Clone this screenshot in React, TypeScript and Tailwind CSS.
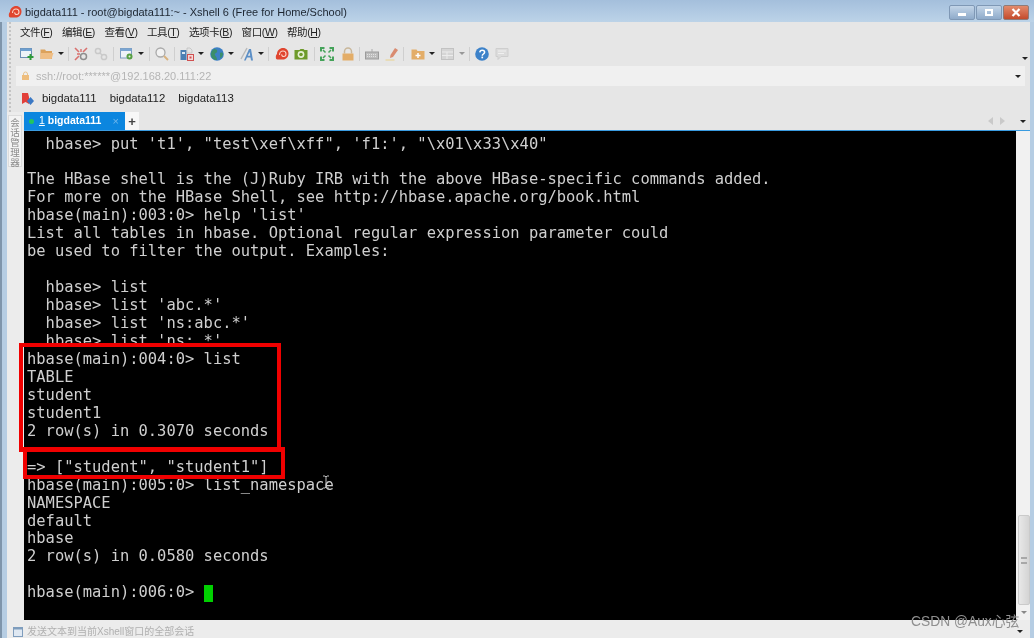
import React from 'react';

const lines = [
  `  hbase> put 't1', "test\\xef\\xff", 'f1:', "\\x01\\x33\\x40"`,
  '',
  'The HBase shell is the (J)Ruby IRB with the above HBase-specific commands added.',
  'For more on the HBase Shell, see http://hbase.apache.org/book.html',
  "hbase(main):003:0> help 'list'",
  'List all tables in hbase. Optional regular expression parameter could',
  'be used to filter the output. Examples:',
  '',
  '  hbase> list',
  "  hbase> list 'abc.*'",
  "  hbase> list 'ns:abc.*'",
  "  hbase> list 'ns:.*'",
  'hbase(main):004:0> list',
  'TABLE',
  'student',
  'student1',
  '2 row(s) in 0.3070 seconds',
  '',
  '=> ["student", "student1"]',
  'hbase(main):005:0> list_namespace',
  'NAMESPACE',
  'default',
  'hbase',
  '2 row(s) in 0.0580 seconds',
  '',
];

const menus = [
  ['文件', 'F'],
  ['编辑', 'E'],
  ['查看', 'V'],
  ['工具', 'T'],
  ['选项卡', 'B'],
  ['窗口', 'W'],
  ['帮助', 'H'],
];

function Caret({ className = 'ml-[4px]' }: { className?: string }) {
  return <span className={`${className} w-0 h-0 border-x-[3px] border-x-transparent border-t-[3px] border-t-[#222]`} />;
}

function Sep({ className = 'ml-[5px]' }: { className?: string }) {
  return <span className={`${className} w-px h-[14px] bg-[#cfcfcf]`} />;
}

function Ico({ children, className = 'ml-[6px]' }: { children: React.ReactNode; className?: string }) {
  return (
    <svg width="14" height="14" viewBox="0 0 14 14" fill="none" className={`${className} shrink-0`}>
      {children}
    </svg>
  );
}

// red snail logo, used in the title bar and the toolbar
function Snail() {
  return (
    <>
      <path d="M1 11.500C.5 9 1 8 2 7c0-3.500 3-6 6-6 3.500 0 5.500 2.500 5.500 5.500 0 3.500-2.500 6-5.500 6H3C2 12.500 1.200 12.200 1 11.500z" fill="#e0452f" />
      <path d="M4.500 8c0-2.500 1.500-4 3.500-4s3 1.500 3 3-1 2.500-2.300 2.500S6.500 8.500 6.800 7.300" stroke="#fbd5c8" strokeWidth="1.100" />
    </>
  );
}

function Toolbar() {
  return (
    <div className="h-[23px] flex items-center pl-[9px] pb-[2px]">
      <Ico className="ml-0">
        <rect x="0.5" y="1.5" width="11" height="9" fill="#eef3f8" stroke="#6d8fb5" />
        <rect x="0.5" y="1.5" width="11" height="2.5" fill="#6d9fd0" />
        <path d="M10.500 7v6M7.500 10h6" stroke="#2f9a3a" strokeWidth="2" />
      </Ico>
      <Ico>
        <path d="M0.500 2.500h4.500l1 1.500h6v8h-11.500z" fill="#dca25c" />
        <path d="M0.500 6h13l-2 6h-11z" fill="#efbe85" />
      </Ico>
      <Caret />
      <Sep className="ml-[4px]" />
      <Ico className="ml-[5px]">
        <path d="M1 1l4 4M13 1L9 5M1 13l4-4" stroke="#d9706e" strokeWidth="1.600" />
        <circle cx="9.500" cy="9.500" r="3" stroke="#8e8e8e" strokeWidth="1.500" />
        <path d="M3 7h3M7 2v3" stroke="#d9706e" strokeWidth="1.400" />
      </Ico>
      <Ico>
        <circle cx="4" cy="4" r="2.600" stroke="#c9c9c9" strokeWidth="1.500" />
        <circle cx="10" cy="10" r="2.600" stroke="#c9c9c9" strokeWidth="1.500" />
        <path d="M6 6l2 2" stroke="#c9c9c9" strokeWidth="1.500" />
      </Ico>
      <Sep />
      <Ico>
        <rect x="0.500" y="1.500" width="11" height="9.500" fill="#eef3f8" stroke="#7c9cc0" />
        <rect x="0.500" y="1.500" width="11" height="2.500" fill="#7aa5d2" />
        <circle cx="9.500" cy="9.500" r="3" fill="#57a043" />
        <circle cx="9.500" cy="9.500" r="1" fill="#e8f3e4" />
      </Ico>
      <Caret />
      <Sep />
      <Ico className="ml-[5px]">
        <circle cx="5.500" cy="5.500" r="4.500" fill="#f2f2f2" stroke="#a9a9a9" strokeWidth="1.300" />
        <path d="M9 9l4 4" stroke="#d8b27e" strokeWidth="2" />
      </Ico>
      <Sep />
      <Ico className="ml-[5px]">
        <rect x="0.500" y="3" width="6" height="10" fill="#4c7fb3" />
        <rect x="2" y="5" width="3" height="2" fill="#dbe7f3" />
        <path d="M7 1h3l2 2v3H7z" fill="#e4e4e4" stroke="#b5b5b5" strokeWidth="0.600" />
        <rect x="7.500" y="7.500" width="6" height="6" fill="#f4d9d9" stroke="#d05050" />
        <rect x="9.500" y="9.500" width="2" height="2" fill="#d05050" />
      </Ico>
      <Caret />
      <Ico>
        <circle cx="7" cy="7" r="6.800" fill="#3c7fc4" />
        <path d="M4 2c2 0 4 1 3 3S4 6 5 8s2 2 2 5c-3 0-6-2-6-6 0-2 1-4 3-5zM10 6c2-1 3 0 3 1s-1 3-2 4-1-3-1-5z" fill="#3b8e6a" />
      </Ico>
      <Caret />
      <Ico>
        <path d="M1 12L7 1" stroke="#b8b8b8" strokeWidth="1.400" />
        <path d="M4 13.500L9 2h2l2 11.500h-2l-.5-3H7l-1.300 3z" fill="#5c8fc6" />
        <path d="M7.800 8.700h2.400L9.600 5z" fill="#e4e4e4" />
      </Ico>
      <Caret />
      <Sep className="ml-[4px]" />
      <Ico><Snail /></Ico>
      <Ico className="ml-[5px]">
        <path d="M0.500 3h5l1 -1h3l1 1h3v9.500h-13z" fill="#6d9a2a" />
        <circle cx="7" cy="7.500" r="3.400" fill="#e5f0d5" />
        <circle cx="7" cy="7.500" r="1.800" fill="#6d9a2a" />
      </Ico>
      <Sep className="ml-[6px]" />
      <Ico className="ml-[5px]">
        <path d="M1 4.500V1h3.500M9.500 1H13v3.500M13 9.500V13H9.500M4.500 13H1V9.500" stroke="#45a35a" strokeWidth="2" />
        <path d="M3 3l2.500 2.500M11 3L8.500 5.500M11 11L8.500 8.500M3 11l2.500-2.500" stroke="#45a35a" strokeWidth="1.500" />
      </Ico>
      <Ico className="ml-[7px]">
        <path d="M3.500 6.500V4.500a3.500 3.500 0 0 1 7 0v2" stroke="#c9b79a" strokeWidth="1.500" />
        <rect x="1.500" y="6.500" width="11" height="7" fill="#e3ad68" />
      </Ico>
      <Sep className="ml-[4px]" />
      <Ico className="ml-[5px]">
        <rect x="0.500" y="5" width="13" height="7" fill="#bdbdbd" stroke="#9b9b9b" />
        <path d="M2 7.500h10M2 9.500h10" stroke="#e2e2e2" strokeDasharray="1 1" />
        <path d="M7 5V2" stroke="#aaa" />
      </Ico>
      <Ico>
        <path d="M10 1l3 2-5 7-3 1 .5-3z" fill="#d98b70" />
        <path d="M0.500 13h9" stroke="#e8d9a8" strokeWidth="1.500" />
      </Ico>
      <Sep className="ml-[4px]" />
      <Ico className="ml-[7px]">
        <path d="M0.500 2.500h5l1 1.500h7v8.500h-13z" fill="#e3ad68" />
        <path d="M7 6v5M4.500 8.500h5" stroke="#fff" strokeWidth="1.500" />
      </Ico>
      <Caret />
      <Ico>
        <rect x="0.500" y="1.500" width="12" height="11" fill="#d5d5d5" stroke="#c2c2c2" />
        <path d="M1 5h11M1 8.500h11M6 5v7" stroke="#ececec" />
      </Ico>
      <Caret className="ml-[4px] opacity-40" />
      <Sep className="ml-[4px]" />
      <Ico className="ml-[5px]">
        <circle cx="7" cy="7" r="6.800" fill="#3d82c9" />
        <path d="M4.800 5.300C5 3.800 6 3.200 7.200 3.200c1.500 0 2.400 1 2.400 2 0 1.800-2.300 1.800-2.300 3.500" stroke="#fff" strokeWidth="1.500" />
        <rect x="6.400" y="9.600" width="1.700" height="1.700" fill="#fff" />
      </Ico>
      <Ico>
        <path d="M1 1.500h12v8H6l-3 3v-3H1z" fill="#dcdcdc" stroke="#cecece" />
        <path d="M3 4h8M3 6.500h6" stroke="#f0f0f0" />
      </Ico>
      <Caret className="ml-auto mr-[2px] mt-[10px]" />
    </div>
  );
}

export default function App() {
  return (
    <div className="relative w-[1034px] h-[638px] overflow-hidden bg-[#b6cde3] font-['Liberation_Sans','Noto_Sans_CJK_SC',sans-serif] blur-[0.5px]">
      {/* title bar */}
      <div className="h-[22px] flex items-center bg-gradient-to-b from-[#a4bfdc] to-[#bcd3e8] pt-[2px] pl-[8px] pr-[5px]">
        <Ico className="ml-0"><Snail /></Ico>
        <span className="ml-[3px] text-[11px] text-[#1c2530] whitespace-nowrap">bigdata111 - root@bigdata111:~ - Xshell 6 (Free for Home/School)</span>
        <div className="ml-auto flex gap-[1px]">
          <div className="w-[26px] h-[15px] rounded-[2px] border border-[#7f98b5] bg-gradient-to-b from-[#c3d5e8] to-[#8fabca] flex items-center justify-center">
            <span className="w-[8px] h-[3px] bg-white mt-[4px]" />
          </div>
          <div className="w-[26px] h-[15px] rounded-[2px] border border-[#7f98b5] bg-gradient-to-b from-[#c3d5e8] to-[#8fabca] flex items-center justify-center">
            <span className="w-[8px] h-[7px] border-2 border-white" />
          </div>
          <div className="w-[26px] h-[15px] rounded-[2px] border border-[#8f7b78] bg-gradient-to-b from-[#e28a6c] to-[#c44a2a] flex items-center justify-center">
            <svg width="10" height="9" viewBox="0 0 10 9"><path d="M1.500 1l7 7M8.500 1l-7 7" stroke="#fff" strokeWidth="2.200" /></svg>
          </div>
        </div>
      </div>

      <div className="flex h-[616px] pr-[4px]">
        {/* window frame, darker outer edge */}
        <div className="w-[7px] flex">
          <div className="w-[2px] bg-[#7f95ab]" />
          <div className="flex-1 bg-[#b6cde3]" />
        </div>
        <div className="flex-1 min-w-0 flex flex-col bg-[#e6e6e6]">
          <div className="pl-[2px]">
            <div className="border-l-2 border-dotted border-l-[#c4c4c4]">
              {/* menu bar */}
              <div className="h-[21px] flex items-center pl-[9px] gap-[9.500px] text-[10.500px] tracking-[-0.4px] text-[#222]">
                {menus.map(([name, key]) => (
                  <span key={key} className="whitespace-nowrap">
                    {name}(<span className="underline">{key}</span>)
                  </span>
                ))}
              </div>
              <Toolbar />
              {/* address bar */}
              <div className="h-[20px] ml-[5px] mr-[5px] flex items-center bg-[#f0f0f0] pl-[5px] pr-[4px]">
                <svg width="9" height="10" viewBox="0 0 9 10" className="shrink-0">
                  <path d="M2.500 4V3a2 2 0 0 1 4 0v1" stroke="#e8c48f" fill="none" />
                  <rect x="1" y="4" width="7" height="5" fill="#eebd7c" />
                </svg>
                <span className="ml-[6px] text-[11px] text-[#b5b5b5]">ssh://root:******@192.168.20.111:22</span>
                <Caret className="ml-auto" />
              </div>
              {/* link bar */}
              <div className="h-[26px] flex items-center pl-[11px] text-[11.400px] text-[#222]">
                <svg width="12" height="12" viewBox="0 0 12 12" className="shrink-0">
                  <path d="M0 0h6l1 4v7L3.500 9 0 11z" fill="#e2403a" />
                  <path d="M5 8l3.500-4L12 8l-3.500 4z" fill="#3a78c4" />
                </svg>
                <span className="ml-[8px]">bigdata111</span>
                <span className="ml-[13px]">bigdata112</span>
                <span className="ml-[13px]">bigdata113</span>
              </div>
            </div>
          </div>

          <div className="flex-1 min-h-0 flex">
            {/* side tab */}
            <div className="w-[17px] bg-[#ececec] pl-[1px]">
              <div className="w-[14px] h-[52px] mt-[3px] flex flex-col items-center pt-[2px] text-[9.500px] leading-[10px] text-[#8a8a8a] bg-[#f3f3f3] border border-[#dcdcdc]">
                {'会话管理器'.split('').map((c, i) => (
                  <span key={i}>{c}</span>
                ))}
              </div>
            </div>
            <div className="flex-1 min-w-0 flex flex-col">
              {/* tabs */}
              <div className="h-[18px] flex items-stretch text-[10.500px]">
                <div className="w-[101px] bg-[#0c86df] text-white flex items-center pl-[5px]">
                  <span className="w-[5px] h-[5px] rounded-full bg-[#22c55e]" />
                  <span className="ml-[5px] font-bold"><span className="underline font-normal">1</span> bigdata111</span>
                  <span className="ml-auto mr-[6px] text-[#6fb7ec] text-[11px]">×</span>
                </div>
                <div className="w-[14px] bg-[#f7f7f7] flex items-center justify-center text-[13px] font-bold text-[#444] leading-none">+</div>
                <div className="ml-auto flex items-center mr-[4px]">
                  <span className="w-0 h-0 border-y-[4px] border-y-transparent border-r-[5px] border-r-[#c9c9c9]" />
                  <span className="ml-[7px] w-0 h-0 border-y-[4px] border-y-transparent border-l-[5px] border-l-[#c9c9c9]" />
                  <Caret className="ml-[15px]" />
                </div>
              </div>
              <div className="h-px bg-[#3a9be0]" />
              <div className="flex-1 min-h-0 flex">
                {/* terminal */}
                <pre className="flex-1 min-w-0 overflow-hidden bg-black text-[#cfcfcf] pt-[4.500px] pl-[3px] text-[15.440px] leading-[17.960px] font-['DejaVu_Sans_Mono',monospace]">
                  {lines.map((l, i) => (
                    <div key={i} className="h-[17.960px]">{l}</div>
                  ))}
                  <div className="h-[17.960px] flex items-center">
                    hbase(main):006:0&gt;&nbsp;<span className="w-[9px] h-[17px] bg-[#00d000]" />
                  </div>
                </pre>
                {/* scrollbar */}
                <div className="w-[14px] bg-[#f1f1f1] flex flex-col pl-[2px]">
                  <div className="h-[384px]" />
                  <div className="h-[90px] bg-gradient-to-r from-[#e8e8e8] to-[#d4d4d4] border border-[#cacaca] rounded-[2px] flex items-center justify-center">
                    <span className="w-[6px] h-[7px] border-y-2 border-[#a8a8a8]" />
                  </div>
                  <div className="flex-1 flex items-center justify-center">
                    <Caret className="opacity-50" />
                  </div>
                </div>
              </div>
            </div>
          </div>

          {/* compose bar */}
          <div className="h-[18px] shrink-0 flex items-center pt-[5px] pl-[6px] pr-[7px] bg-[#ececec] text-[10px] text-[#b0b0b0]">
            <svg width="10" height="10" viewBox="0 0 10 10" className="shrink-0">
              <rect x="0.500" y="0.500" width="9" height="9" fill="#dfe8f2" stroke="#7f9dbd" />
              <rect x="0.500" y="0.500" width="9" height="2" fill="#7f9dbd" />
            </svg>
            <span className="ml-[4px]">发送文本到当前Xshell窗口的全部会话</span>
            <Caret className="ml-auto" />
          </div>
        </div>
      </div>

      {/* annotation boxes drawn over the terminal */}
      <div className="absolute left-[19px] top-[343px] w-[262px] h-[109px] border-[4px] border-[#f00000]" />
      <div className="absolute left-[23px] top-[447px] w-[262px] h-[32px] border-[4px] border-[#f00000]" />
      {/* mouse cursor */}
      <svg width="8" height="14" viewBox="0 0 8 14" className="absolute left-[322px] top-[475px]">
        <path d="M1 1h2l1 1 1-1h2M4 2v10M1 13h2l1-1 1 1h2" stroke="#bdbdbd" fill="none" />
      </svg>
      {/* watermark */}
      <span className="absolute left-[911px] top-[612px] text-[13.800px] text-[#8f8f8f] whitespace-nowrap">CSDN @Aux心弦</span>
    </div>
  );
}
